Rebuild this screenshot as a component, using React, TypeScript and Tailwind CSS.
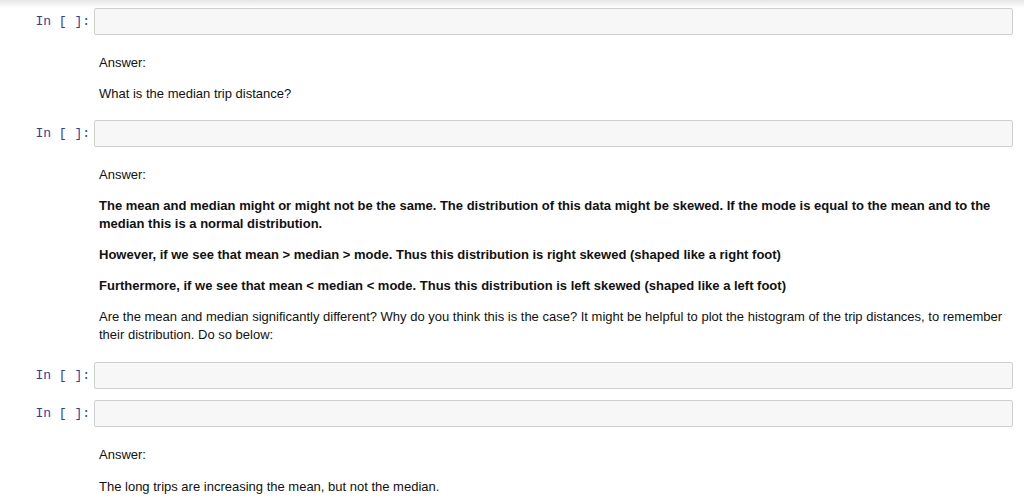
import * as React from 'react';

// Notebook cells: a code input row and a rendered markdown block

function CodeCell() {
  return (
    <div className="flex items-stretch">
      <div className="flex w-[94px] shrink-0 items-center justify-end pr-[4px] font-['Liberation_Mono',monospace] text-[13px] text-[#303f9f]">
        In&nbsp;[&nbsp;]:
      </div>
      <div className="mr-[11px] h-[27px] flex-1 rounded-[2px] border border-[#cfcfcf] bg-[#f7f7f7]" />
    </div>
  );
}

function MarkdownCell({ children }: { children: React.ReactNode }) {
  return (
    <div className="ml-[99px] mr-[16px] flex flex-col gap-[13px] pt-[19px] pb-[17px] text-[13px] leading-[18px] text-[#111]">
      {children}
    </div>
  );
}

export default function App() {
  return (
    <div className="min-h-[499px] bg-white font-['Liberation_Sans',Arial,sans-serif]">
      <div className="h-[8px] bg-gradient-to-b from-[#e6e6e6] to-white" />

      <CodeCell />
      <MarkdownCell>
        <p>Answer:</p>
        <p>What is the median trip distance?</p>
      </MarkdownCell>

      <CodeCell />
      <MarkdownCell>
        <p>Answer:</p>
        <p className="font-bold">
          The mean and median might or might not be the same. The distribution of this data might be
          skewed. If the mode is equal to the mean and to the median this is a normal distribution.
        </p>
        <p className="font-bold">
          However, if we see that mean &gt; median &gt; mode. Thus this distribution is right skewed
          (shaped like a right foot)
        </p>
        <p className="font-bold">
          Furthermore, if we see that mean &lt; median &lt; mode. Thus this distribution is left
          skewed (shaped like a left foot)
        </p>
        <p>
          Are the mean and median significantly different? Why do you think this is the case? It might
          be helpful to plot the histogram of the trip distances, to remember their distribution. Do so
          below:
        </p>
      </MarkdownCell>

      <div className="mt-[1px] flex flex-col gap-[11px]">
        <CodeCell />
        <CodeCell />
      </div>
      <MarkdownCell>
        <p>Answer:</p>
        <p className="mt-[1px]">The long trips are increasing the mean, but not the median.</p>
      </MarkdownCell>
    </div>
  );
}
